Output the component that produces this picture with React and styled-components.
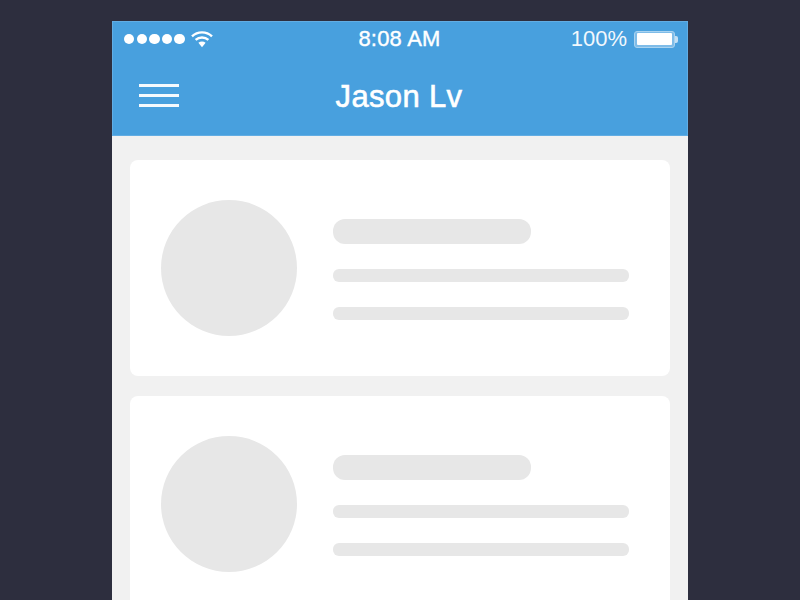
import React from 'react'
import styled, { createGlobalStyle } from 'styled-components'

const GlobalStyle = createGlobalStyle`
  html, body {
    margin: 0;
    height: 100%;
    overflow: hidden;
    background: #2d2e3e;
    font-family: 'Liberation Sans', Arial, sans-serif;
  }
`

const Stage = styled.div`
  height: 600px;
  overflow: hidden;
  display: flex;
  justify-content: center;
  padding-top: 21px;
  box-sizing: border-box;
`

const Phone = styled.div`
  width: 576px;
  height: 579px;
  overflow: hidden;
  background: #f1f1f1;
`

const Header = styled.header`
  height: 115px;
  background: #48a0de;
  color: #fff;
  box-sizing: border-box;
  box-shadow: inset 0 0 0 1px #62ade3;
`

const StatusBar = styled.div`
  height: 36px;
  display: grid;
  grid-template-columns: 1fr auto 1fr;
  align-items: center;
  padding: 0 13px 0 12px;
`

const Signal = styled.div`
  display: flex;
  align-items: center;
  gap: 6px;
`

const Dots = styled.div`
  display: flex;
  gap: 2.2px;
`

const Dot = styled.span`
  width: 10.4px;
  height: 10.4px;
  border-radius: 50%;
  background: #fff;
`

const Time = styled.div`
  font-size: 22px;
  font-weight: 500;
  letter-spacing: 0.2px;
  -webkit-text-stroke: 0.4px #fff;
`

const Power = styled.div`
  display: flex;
  justify-content: flex-end;
  align-items: center;
  gap: 7px;
  font-size: 22px;
  color: #f2f8fd;
`

const Battery = styled.div`
  position: relative;
  width: 41px;
  height: 17px;
  box-sizing: border-box;
  border: 1px solid #a9d3f0;
  border-radius: 3px;
  padding: 1.5px 2px;
  background: #7fbce8;

  &::before {
    content: '';
    display: block;
    height: 100%;
    background: #fff;
    border-radius: 1px;
  }

  &::after {
    content: '';
    position: absolute;
    right: -4px;
    top: 4px;
    width: 3px;
    height: 7px;
    border-radius: 0 2px 2px 0;
    background: #c4e0f5;
  }
`

const NavBar = styled.div`
  position: relative;
  height: 79px;
  display: flex;
  align-items: center;
  justify-content: center;
`

const Menu = styled.div`
  position: absolute;
  left: 27px;
  top: 27px;
  width: 40px;
  display: flex;
  flex-direction: column;
  gap: 7.5px;
`

const MenuLine = styled.span`
  height: 2.5px;
  background: #f4f9fd;
`

const Title = styled.h1`
  margin: 0 0 38px;
  position: relative;
  top: 19px;
  left: -1px;
  font-size: 31px;
  font-weight: 500;
  letter-spacing: 0.35px;
  -webkit-text-stroke: 0.6px #fff;
`

const List = styled.div`
  padding: 24px 18px;
  display: flex;
  flex-direction: column;
  gap: 20px;
`

const Card = styled.div`
  height: 216px;
  box-sizing: border-box;
  padding: 40px 31px;
  background: #fff;
  border-radius: 8px;
  display: flex;
  gap: 36px;
`

const Avatar = styled.div`
  width: 136px;
  height: 136px;
  flex: none;
  border-radius: 50%;
  background: #e7e7e7;
`

const Lines = styled.div`
  flex: 1;
  padding: 19px 10px 0 0;
  display: flex;
  flex-direction: column;
  gap: 25px;
`

const Heading = styled.div`
  width: 198px;
  height: 25px;
  border-radius: 12px;
  background: #e7e7e7;
`

const Line = styled.div`
  height: 13px;
  border-radius: 6px;
  background: #e7e7e7;
`

function Wifi() {
  return (
    <svg width="22" height="18" viewBox="0 0 22 18" fill="none">
      <path d="M1 6.4C6.6 1 15.4 1 21 6.4" stroke="#fff" strokeWidth="2.4" />
      <path d="M4.6 9.9C8.2 6.6 13.8 6.6 17.4 9.9" stroke="#fff" strokeWidth="2.4" />
      <path d="M7.4 12.8C9.5 11.2 12.5 11.2 14.6 12.8L11 17.2Z" fill="#fff" />
    </svg>
  )
}

function ProfileCard() {
  return (
    <Card>
      <Avatar />
      <Lines>
        <Heading />
        <Line />
        <Line />
      </Lines>
    </Card>
  )
}

export default function App() {
  return (
    <Stage>
      <GlobalStyle />
      <Phone>
        <Header>
          <StatusBar>
            <Signal>
              <Dots>
                <Dot />
                <Dot />
                <Dot />
                <Dot />
                <Dot />
              </Dots>
              <Wifi />
            </Signal>
            <Time>8:08 AM</Time>
            <Power>
              100%
              <Battery />
            </Power>
          </StatusBar>
          <NavBar>
            <Menu>
              <MenuLine />
              <MenuLine />
              <MenuLine />
            </Menu>
            <Title>Jason Lv</Title>
          </NavBar>
        </Header>
        <List>
          <ProfileCard />
          <ProfileCard />
        </List>
      </Phone>
    </Stage>
  )
}
